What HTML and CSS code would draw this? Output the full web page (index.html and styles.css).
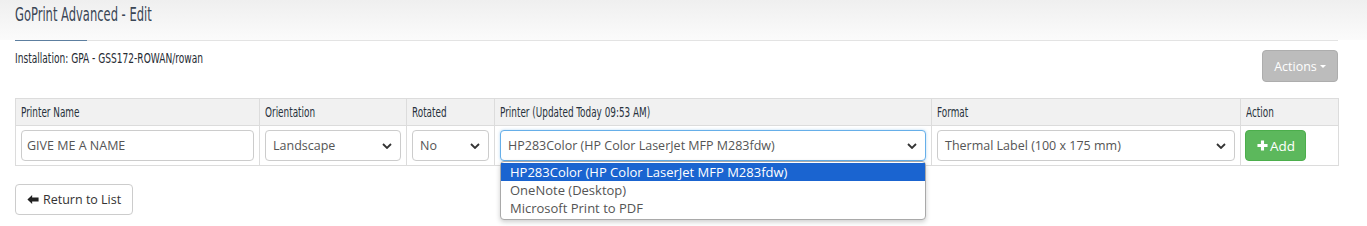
FILE: index.html
```html
<!DOCTYPE html>
<html>
<head>
<meta charset="utf-8">
<link rel="stylesheet" href="styles.css">
</head>
<body>
<div class="page-head">
  <h1 class="title"><span class="narrow n-title">GoPrint Advanced - Edit</span></h1>
</div>
<div class="content">
  <div class="rule"><span class="accent"></span></div>
  <div class="toolbar">
    <div class="install"><span class="narrow n-install">Installation: GPA - GSS172-ROWAN/rowan</span></div>
    <button class="btn btn-actions">Actions <span class="caret"></span></button>
  </div>
  <table class="grid">
    <colgroup>
      <col class="c1"><col class="c2"><col class="c3"><col class="c4"><col class="c5"><col class="c6">
    </colgroup>
    <thead>
      <tr>
        <th><span class="narrow n-th">Printer Name</span></th>
        <th><span class="narrow n-th">Orientation</span></th>
        <th><span class="narrow n-th">Rotated</span></th>
        <th><span class="narrow n-th">Printer (Updated Today 09:53 AM)</span></th>
        <th><span class="narrow n-th">Format</span></th>
        <th><span class="narrow n-th">Action</span></th>
      </tr>
    </thead>
    <tbody>
      <tr>
        <td><div class="field">GIVE ME A NAME</div></td>
        <td><div class="field select">Landscape<svg class="chev" viewBox="0 0 10 6" width="10" height="6"><path d="M1 1 L5 5 L9 1" fill="none" stroke="#333" stroke-width="1.8"/></svg></div></td>
        <td><div class="field select">No<svg class="chev" viewBox="0 0 10 6" width="10" height="6"><path d="M1 1 L5 5 L9 1" fill="none" stroke="#333" stroke-width="1.8"/></svg></div></td>
        <td class="printer-cell">
          <div class="field select focus">HP283Color (HP Color LaserJet MFP M283fdw)<svg class="chev" viewBox="0 0 10 6" width="10" height="6"><path d="M1 1 L5 5 L9 1" fill="none" stroke="#333" stroke-width="1.8"/></svg></div>
          <ul class="popup">
            <li class="sel">HP283Color (HP Color LaserJet MFP M283fdw)</li>
            <li>OneNote (Desktop)</li>
            <li>Microsoft Print to PDF</li>
          </ul>
        </td>
        <td><div class="field select">Thermal Label (100 x 175 mm)<svg class="chev" viewBox="0 0 10 6" width="10" height="6"><path d="M1 1 L5 5 L9 1" fill="none" stroke="#333" stroke-width="1.8"/></svg></div></td>
        <td class="action-cell"><button class="btn btn-add"><svg viewBox="0 0 12 12" width="11" height="11"><path d="M4.3 0.5 h3.4 v3.8 h3.8 v3.4 h-3.8 v3.8 h-3.4 v-3.8 h-3.8 v-3.4 h3.8 z" fill="#fff"/></svg>Add</button></td>
      </tr>
    </tbody>
  </table>
  <button class="btn btn-return"><svg viewBox="0 0 14 12" width="12" height="11"><path d="M0.5 6 L6 0.8 L6 3.8 L13.5 3.8 L13.5 8.2 L6 8.2 L6 11.2 Z" fill="#222"/></svg>Return to List</button>
</div>
</body>
</html>
```
FILE: styles.css
```css
html, body {
  margin: 0;
  padding: 0;
  background: #fff;
}
body {
  font-family: "Open Sans", "Liberation Sans", sans-serif;
  font-size: 12.5px;
  color: #555;
  width: 1367px;
  height: 226px;
  overflow: hidden;
}
.narrow {
  display: inline-block;
  white-space: nowrap;
  font-family: "DejaVu Sans Condensed", "DejaVu Sans", sans-serif;
  transform-origin: left center;
}
.n-title { transform: scaleX(0.64); }
.n-install { transform: scaleX(0.72); }
.n-th { transform: scaleX(0.68); }
.page-head {
  height: 40px;
  background: linear-gradient(#efefef, #fbfbfb);
  padding: 0 15px;
  box-sizing: border-box;
}
.title {
  margin: 0;
  padding-top: 2px;
  font-weight: normal;
  font-size: 20px;
  line-height: 24px;
  color: #3a4655;
}
.content {
  padding: 0 29px 0 15px;
}
.rule {
  height: 1px;
  background: #e3e3e3;
  display: flex;
}
.accent {
  width: 72px;
  background: #5d7fa0;
}
.toolbar {
  display: flex;
  justify-content: space-between;
  align-items: flex-start;
  height: 57px;
}
.install {
  font-size: 14px;
  line-height: 16px;
  color: #262b33;
  margin-top: 9px;
}
.btn {
  font-family: "Open Sans", "Liberation Sans", sans-serif;
  font-size: 12.5px;
  border-radius: 4px;
  border: 1px solid #ccc;
  background: #fff;
  display: inline-flex;
  align-items: center;
  box-sizing: border-box;
  padding: 0 12px;
  cursor: pointer;
}
.btn-actions {
  margin-top: 9px;
  width: 76px;
  height: 32px;
  background: #bcbcbc;
  border-color: #adadad;
  color: #fff;
  justify-content: center;
  padding: 0;
}
.caret {
  display: inline-block;
  width: 0;
  height: 0;
  margin-left: 3px;
  border-left: 3px solid transparent;
  border-right: 3px solid transparent;
  border-top: 3px solid #fff;
}
.grid {
  border-collapse: collapse;
  table-layout: fixed;
  width: 1323px;
}
.c1 { width: 244px; }
.c2 { width: 147px; }
.c3 { width: 88px; }
.c4 { width: 437px; }
.c5 { width: 309px; }
.c6 { width: 98px; }
.grid th, .grid td {
  border: 1px solid #dcdcdc;
  text-align: left;
  vertical-align: middle;
}
.grid th {
  background: #f1f1f1;
  height: 27px;
  box-sizing: border-box;
  font-weight: normal;
  font-size: 14.5px;
  line-height: 16px;
  color: #28313c;
  padding: 0 5px;
}
.grid td {
  padding: 4px 5px;
  height: 31px;
}
.grid td.action-cell {
  padding-left: 4px;
}
.field {
  height: 31px;
  box-sizing: border-box;
  border: 1px solid #ccc;
  border-radius: 4px;
  padding: 0 5px;
  display: flex;
  align-items: center;
  color: #555;
  background: #fff;
  white-space: nowrap;
}
.select {
  padding: 0 8px 0 7px;
  justify-content: space-between;
}
.focus {
  border-color: #66afe9;
  box-shadow: 0 0 3px rgba(102, 175, 233, 0.5);
}
.chev {
  flex: none;
}
.printer-cell {
  position: relative;
}
.popup {
  position: absolute;
  left: 5px;
  top: 35px;
  width: 426px;
  box-sizing: border-box;
  margin: 0;
  padding: 1px 0 2px;
  list-style: none;
  background: #fff;
  border: 1px solid #a9a9a9;
  border-radius: 4px;
  box-shadow: 0 2px 5px rgba(0, 0, 0, 0.2);
  z-index: 5;
  font-size: 13px;
  color: #555;
}
.popup li {
  height: 18px;
  line-height: 18px;
  padding: 0 9px;
}
.popup li.sel {
  background: #1a64d0;
  color: #fff;
}
.btn-add {
  height: 31px;
  width: 61px;
  background: #5cb85c;
  border-color: #4cae4c;
  color: #fff;
  padding: 0 0 0 11px;
  font-size: 13.5px;
  gap: 2px;
}
.btn-return {
  margin-top: 18px;
  height: 31px;
  width: 118px;
  color: #333;
  padding: 0 0 0 11px;
  gap: 4px;
}
```
